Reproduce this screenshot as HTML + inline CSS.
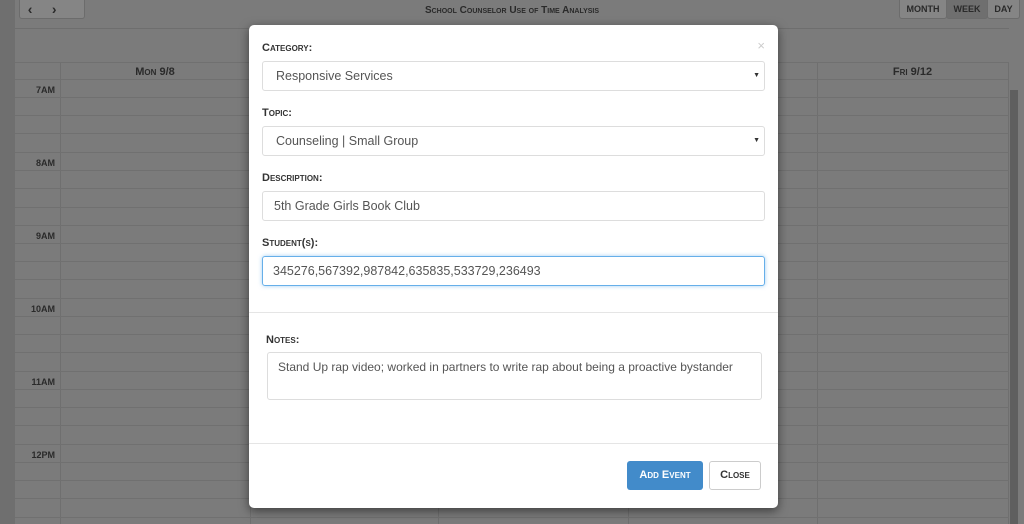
<!DOCTYPE html><html><head><style>
html,body{margin:0;width:1024px;height:524px;overflow:hidden}
body{background:#7b7b7b;font-family:"Liberation Sans",sans-serif;position:relative}
.strip{position:absolute;left:0;top:0;width:15px;height:524px;background:#6f6f6f}
.btn{position:absolute;top:0;height:18px;background:#858585;border:1px solid #6c6c6c;border-top:none;border-radius:0 0 3px 3px;font:bold 10px "Liberation Sans";color:#2a2a2a;line-height:18px;text-align:center}
.title{position:absolute;top:5px;left:0;width:1024px;text-align:center;font:bold 10px "Liberation Sans";font-variant:small-caps;color:#2a2a2a}
.grid{position:absolute;left:15px;top:28px;width:994px;height:496px;border-top:1px solid #6e6e6e;overflow:hidden}
.h{position:absolute;left:0;width:994px;height:1px;background:#707070}
.v{position:absolute;top:34px;width:1px;height:470px;background:#6f6f6f}
.day{position:absolute;top:37px;font:bold 11px "Liberation Sans";font-variant:small-caps;color:#2a2a2a;text-align:center}
.tm{position:absolute;left:0;width:40px;text-align:right;font:bold 9px "Liberation Sans";font-variant:small-caps;color:#2a2a2a}
.modal{position:absolute;left:249px;top:25px;width:529px;height:483px;background:#fff;border-radius:5px;box-shadow:0 3px 10px rgba(0,0,0,.5)}
.lbl{position:absolute;left:13px;font:bold 11px "Liberation Sans";font-variant:small-caps;color:#333}
.in{position:absolute;left:13px;width:503px;height:30px;border:1px solid #ddd;border-radius:3px;box-sizing:border-box;font-size:12.5px;color:#555;line-height:28px;padding-left:13px;white-space:nowrap}
.in .ar{position:absolute;right:4px;top:0;font-size:7px;color:#333}
</style></head><body>
<div class="strip"></div>
<div class="btn" style="left:19px;width:64px;text-align:left;font-size:14px">&nbsp;&nbsp;‹&nbsp;&nbsp;&nbsp;&nbsp;&nbsp;›</div>
<div class="title">School Counselor Use of Time Analysis</div>
<div class="btn" style="left:899px;width:46px;font-size:9px">MONTH</div>
<div class="btn" style="left:946px;width:40px;font-size:9px;background:#6f6f6f">WEEK</div>
<div class="btn" style="left:987px;width:31px;font-size:9px">DAY</div>
<div class="grid">
<div class="h" style="top:33px"></div><div class="h" style="top:50px"></div>
<div class="v" style="left:45px"></div><div class="v" style="left:235px"></div><div class="v" style="left:423px"></div><div class="v" style="left:613px"></div><div class="v" style="left:802px"></div><div class="v" style="left:993px"></div>
<div class="day" style="left:45px;width:190px">Mon 9/8</div>
<div class="day" style="left:802px;width:191px">Fri 9/12</div>
<div class="h" style="top:68px"></div><div class="h" style="top:86px"></div><div class="h" style="top:104px"></div><div class="h" style="top:123px"></div><div class="h" style="top:141px"></div><div class="h" style="top:159px"></div><div class="h" style="top:178px"></div><div class="h" style="top:196px"></div><div class="h" style="top:214px"></div><div class="h" style="top:232px"></div><div class="h" style="top:250px"></div><div class="h" style="top:269px"></div><div class="h" style="top:287px"></div><div class="h" style="top:305px"></div><div class="h" style="top:323px"></div><div class="h" style="top:342px"></div><div class="h" style="top:360px"></div><div class="h" style="top:378px"></div><div class="h" style="top:396px"></div><div class="h" style="top:415px"></div><div class="h" style="top:433px"></div><div class="h" style="top:451px"></div><div class="h" style="top:469px"></div><div class="h" style="top:488px"></div>
<div class="tm" style="top:56px">7AM</div><div class="tm" style="top:129px">8AM</div><div class="tm" style="top:202px">9AM</div><div class="tm" style="top:275px">10AM</div><div class="tm" style="top:348px">11AM</div><div class="tm" style="top:421px">12PM</div>
</div>
<div style="position:absolute;left:1010px;top:90px;width:8px;height:434px;background:#5f5f5f"></div>
<div class="modal">
<div style="position:absolute;right:13px;top:13px;color:#ccc;font-size:13px">×</div>
<div class="lbl" style="top:17px">Category:</div>
<div class="in" style="top:36px">Responsive Services<span class="ar">▼</span></div>
<div class="lbl" style="top:82px">Topic:</div>
<div class="in" style="top:101px">Counseling | Small Group<span class="ar">▼</span></div>
<div class="lbl" style="top:147px">Description:</div>
<div class="in" style="top:166px;padding-left:11px">5th Grade Girls Book Club</div>
<div class="lbl" style="top:212px">Student(s):</div>
<div class="in" style="top:231px;border-color:#66afe9;box-shadow:0 0 4px rgba(102,175,233,.6);padding-left:10px">345276,567392,987842,635835,533729,236493</div>
<div style="position:absolute;left:0;top:287px;width:529px;height:1px;background:#e5e5e5"></div>
<div class="lbl" style="top:309px;left:17px">Notes:</div>
<div class="in" style="top:327px;left:18px;width:495px;height:48px;line-height:16px;padding:6px 10px;font-size:12px">Stand Up rap video; worked in partners to write rap about being a proactive bystander</div>
<div style="position:absolute;left:0;top:418px;width:529px;height:1px;background:#e5e5e5"></div>
<div style="position:absolute;left:378px;top:436px;width:76px;height:29px;background:#428bca;border-radius:3px;color:#fff;font:bold 11px 'Liberation Sans';font-variant:small-caps;text-align:center;line-height:29px">Add Event</div>
<div style="position:absolute;left:460px;top:436px;width:52px;height:29px;border:1px solid #ccc;box-sizing:border-box;border-radius:3px;color:#333;font:bold 11px 'Liberation Sans';font-variant:small-caps;text-align:center;line-height:27px">Close</div>
</div>
</body></html>
